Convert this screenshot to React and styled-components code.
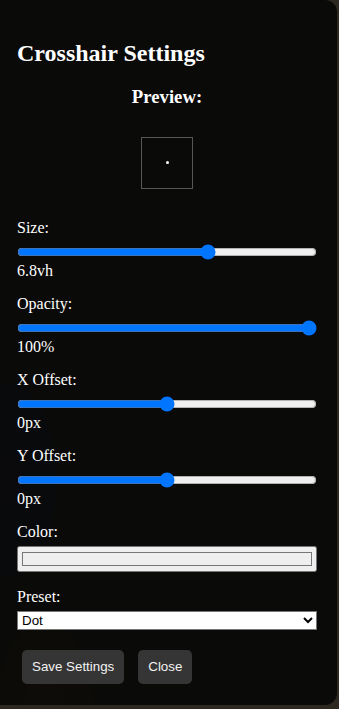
import React from "react";
import styled, { createGlobalStyle } from "styled-components";

const Global = createGlobalStyle`
  html, body { margin: 0; padding: 0; }
  body {
    background: #2d2920;
    font-family: "Liberation Serif", "Times New Roman", serif;
    color: #ffffff;
  }
`;

const Scene = styled.div`
  width: 339px;
  height: 709px;
  overflow: hidden;
  background-color: #2d2920;
  background-image:
    radial-gradient(ellipse 60px 120px at 8px 480px, #2a3350 0%, #252c44 80%, transparent 82%),
    radial-gradient(ellipse 70px 140px at 45px 720px, #5a4a10 0%, #4a3c0c 70%, transparent 72%);
  background-size: 339px 709px, 339px 705px;
  background-repeat: no-repeat;
`;

const Panel = styled.div`
  box-sizing: border-box;
  width: 337px;
  height: 705px;
  padding: 20px 20px 20px 17px;
  background: rgba(8, 8, 8, 0.93);
  border-radius: 0 12px 12px 0;
`;

const Title = styled.h2`
  margin: 20px 0 0;
  font-size: 24px;
  font-weight: bold;
`;

const PreviewSection = styled.div`
  display: flex;
  flex-direction: column;
  align-items: center;
`;

const PreviewHeading = styled.h3`
  margin: 18.72px 0 0;
  font-size: 18.72px;
  font-weight: bold;
`;

const PreviewBox = styled.div`
  margin-top: 29px;
  width: 50px;
  height: 50px;
  border: 1px solid #575757;
  display: flex;
  align-items: center;
  justify-content: center;
`;

const Dot = styled.div`
  width: 3px;
  height: 3px;
  border-radius: 50%;
  background: #ffffff;
`;

const Group = styled.div`
  margin-top: ${(p) => p.$top || 0}px;
  margin-bottom: 15.2px;
`;

const Label = styled.label`
  display: block;
  font-size: 16px;
`;

const Range = styled.input`
  display: block;
  width: 100%;
  box-sizing: border-box;
  margin: 7px 0 2px;
  accent-color: #0075ff;
`;

const Value = styled.span`
  display: block;
  font-size: 16px;
`;

const ColorInput = styled.input`
  display: block;
  width: 100%;
  height: 26px;
  box-sizing: border-box;
  margin-top: 5px;
`;

const Select = styled.select`
  display: block;
  width: 100%;
  height: 19px;
  margin-top: 5px;
  font-family: "Liberation Sans", Arial, sans-serif;
  font-size: 13.33px;
  background: #ffffff;
  color: #000;
`;

const Buttons = styled.div`
  display: flex;
  gap: 14px;
  margin: 20px 0 0 5px;
`;

const Button = styled.button`
  padding: 10px 10px;
  border: none;
  border-radius: 5px;
  background: #353535;
  color: #f2f2f2;
  font-family: "Liberation Sans", Arial, sans-serif;
  font-size: 13.33px;
  line-height: 14px;
  cursor: pointer;
`;

const sliders = [
  { label: "Size:", min: 1, max: 10, step: 0.1, value: 6.8, text: "6.8vh" },
  { label: "Opacity:", min: 0, max: 100, step: 1, value: 100, text: "100%" },
  { label: "X Offset:", min: -50, max: 50, step: 1, value: 0, text: "0px" },
  { label: "Y Offset:", min: -50, max: 50, step: 1, value: 0, text: "0px" },
];

export default function App() {
  return (
    <>
      <Global />
      <Scene>
        <Panel>
          <Title>Crosshair Settings</Title>
          <PreviewSection>
            <PreviewHeading>Preview:</PreviewHeading>
            <PreviewBox>
              <Dot />
            </PreviewBox>
          </PreviewSection>
          {sliders.map((s, i) => (
            <Group key={s.label} $top={i === 0 ? 30 : 0}>
              <Label>{s.label}</Label>
              <Range
                type="range"
                min={s.min}
                max={s.max}
                step={s.step}
                defaultValue={s.value}
              />
              <Value>{s.text}</Value>
            </Group>
          ))}
          <Group>
            <Label>Color:</Label>
            <ColorInput type="color" defaultValue="#efefef" />
          </Group>
          <Group>
            <Label>Preset:</Label>
            <Select defaultValue="dot">
              <option value="dot">Dot</option>
              <option value="cross">Cross</option>
              <option value="circle">Circle</option>
            </Select>
          </Group>
          <Buttons>
            <Button>Save Settings</Button>
            <Button>Close</Button>
          </Buttons>
        </Panel>
      </Scene>
    </>
  );
}
